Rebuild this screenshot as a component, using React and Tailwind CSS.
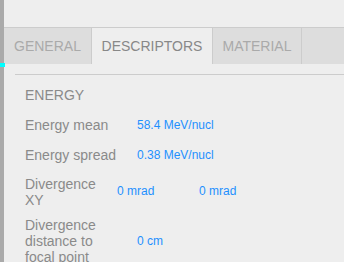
import React from "react";

const tabs = [
  { title: "GENERAL", width: "w-[88px]", active: false },
  { title: "DESCRIPTORS", width: "w-[121px]", active: true },
  { title: "MATERIAL", width: "w-[89px]", active: false },
];

function Value({ children }) {
  return <span className="text-[12px] leading-[16px] text-[#1e90ff]">{children}</span>;
}

export default function App() {
  return (
    <div
      className="flex h-[262px] w-[344px] overflow-hidden bg-[#eeeeee]"
      style={{ fontFamily: '"Liberation Sans", Arial, sans-serif' }}
    >
      {/* Left scroll rail */}
      <div className="flex w-[4px] shrink-0 flex-col bg-[#aaaaaa]">
        <div className="h-[63px] shrink-0" />
        <div className="relative z-10 h-[4px] w-[5px] shrink-0 bg-[#00ffff]" />
      </div>

      <div className="flex min-w-0 flex-1 flex-col">
        <div className="h-[28px] shrink-0 border-b border-[#cccccc]" />

        {/* Tabs */}
        <div className="flex h-[36px] shrink-0 bg-[#dddddd]">
          {tabs.map(({ title, width, active }) => (
            <div
              key={title}
              className={`${width} flex shrink-0 items-center justify-center border-r border-[#cccccc] text-[14px] ${
                active ? "bg-[#eeeeee] text-[#888888]" : "text-[#aaaaaa]"
              }`}
            >
              {title}
            </div>
          ))}
          <div className="flex-1" />
        </div>

        {/* Descriptors panel */}
        <div className="ml-[11px] mt-[10px] border-t border-[#cccccc] pl-[10px] text-[14px] leading-[16px] text-[#8a8a8a]">
          <div className="mt-[12px]">ENERGY</div>

          <div className="mt-[7px] flex h-[30px] items-center">
            <div className="w-[112px] shrink-0">Energy mean</div>
            <Value>58.4 MeV/nucl</Value>
          </div>

          <div className="flex h-[30px] items-center">
            <div className="w-[112px] shrink-0">Energy spread</div>
            <Value>0.38 MeV/nucl</Value>
          </div>

          <div className="mt-[6px] flex items-start">
            <div className="w-[80px] shrink-0">Divergence XY</div>
            <div className="ml-[12px] mt-[6px] w-[82px] shrink-0">
              <Value>0 mrad</Value>
            </div>
            <div className="mt-[6px]">
              <Value>0 mrad</Value>
            </div>
          </div>

          <div className="mt-[9px] flex items-start">
            <div className="w-[80px] shrink-0">Divergence distance to focal point</div>
            <div className="ml-[32px] mt-[15px]">
              <Value>0 cm</Value>
            </div>
          </div>
        </div>
      </div>
    </div>
  );
}
